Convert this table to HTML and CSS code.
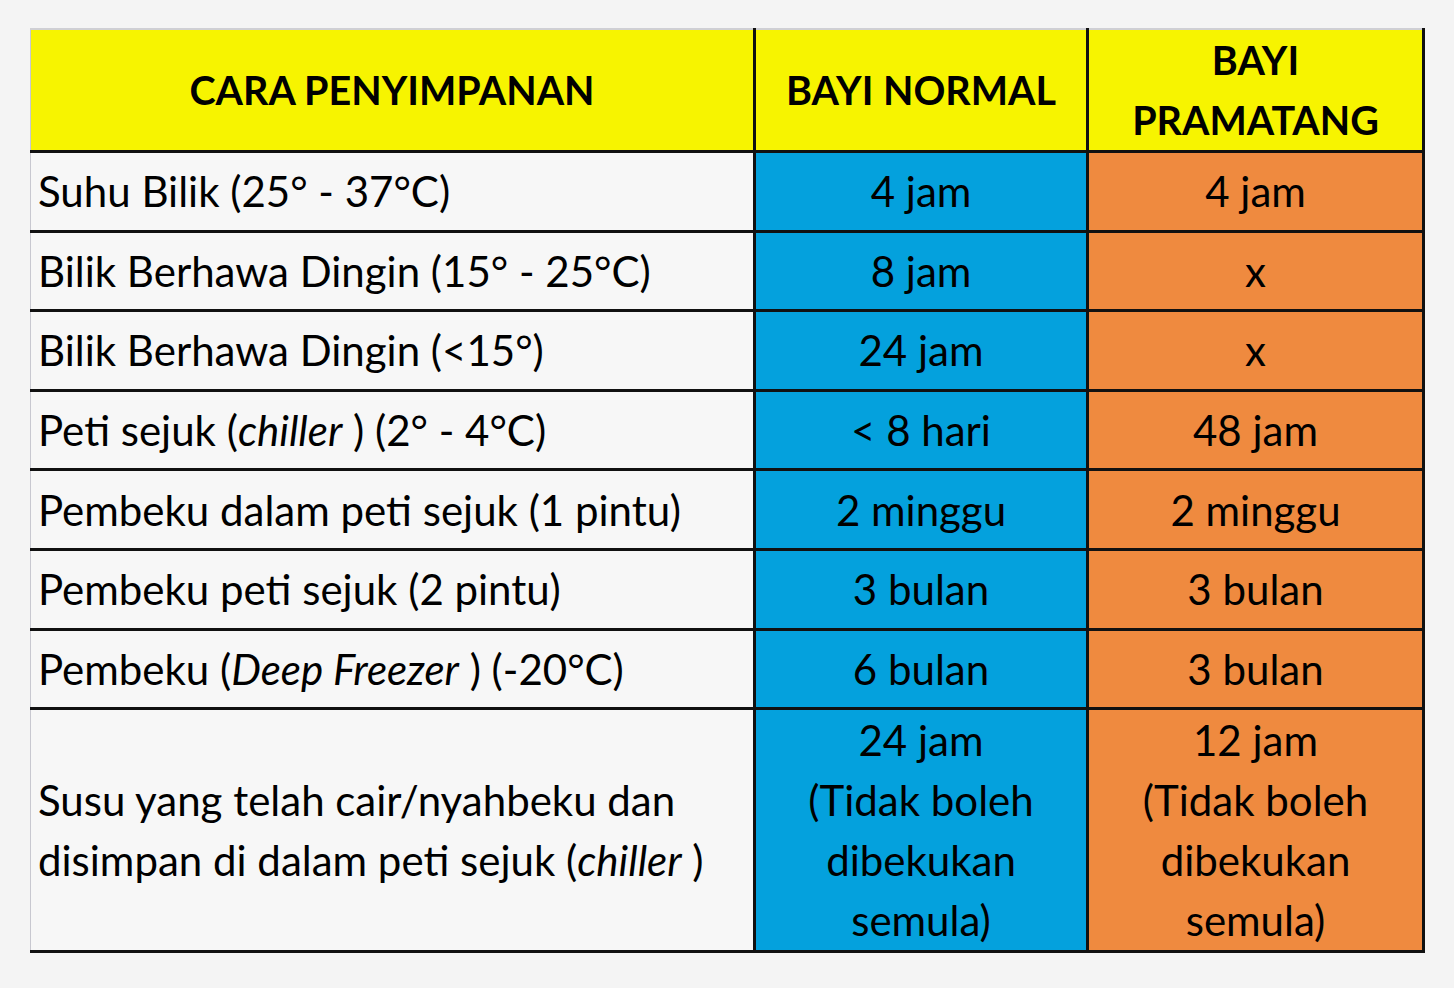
FILE: index.html
```html
<!DOCTYPE html>
<html>
<head>
<meta charset="utf-8">
<link rel="stylesheet" href="styles.css">
</head>
<body>
<table class="tbl">
  <colgroup><col class="c1"><col class="c2"><col class="c3"></colgroup>
  <tr class="head">
    <th>CARA PENYIMPANAN</th>
    <th>BAYI NORMAL</th>
    <th>BAYI<br>PRAMATANG</th>
  </tr>
  <tr><td class="lbl">Suhu Bilik (25° - 37°C)</td><td class="b">4 jam</td><td class="o">4 jam</td></tr>
  <tr><td class="lbl">Bilik Berhawa Dingin (15° - 25°C)</td><td class="b">8 jam</td><td class="o">x</td></tr>
  <tr><td class="lbl">Bilik Berhawa Dingin (&lt;15°)</td><td class="b">24 jam</td><td class="o">x</td></tr>
  <tr><td class="lbl">Peti sejuk (<i>chiller</i> ) (2° - 4°C)</td><td class="b">&lt; 8 hari</td><td class="o">48 jam</td></tr>
  <tr><td class="lbl">Pembeku dalam peti sejuk (1 pintu)</td><td class="b">2 minggu</td><td class="o">2 minggu</td></tr>
  <tr><td class="lbl">Pembeku peti sejuk (2 pintu)</td><td class="b">3 bulan</td><td class="o">3 bulan</td></tr>
  <tr><td class="lbl">Pembeku (<i>Deep Freezer</i> ) (-20°C)</td><td class="b">6 bulan</td><td class="o">3 bulan</td></tr>
  <tr class="last">
    <td class="lbl">Susu yang telah cair/nyahbeku dan<br>disimpan di dalam peti sejuk (<i>chiller</i> )</td>
    <td class="b">24 jam<br>(Tidak boleh<br>dibekukan<br>semula)</td>
    <td class="o">12 jam<br>(Tidak boleh<br>dibekukan<br>semula)</td>
  </tr>
</table>
</body>
</html>
```
FILE: styles.css
```css
html, body {
  margin: 0;
  padding: 0;
  background: #f4f4f4;
}
body {
  padding: 28px 0 0 30px;
  font-family: Lato, "Open Sans", sans-serif;
  color: #000;
}
.tbl {
  border-collapse: collapse;
  table-layout: fixed;
  width: 1393px;
  border-left: 1px solid #c8c8d0;
  border-top: 2px solid #cfcfd4;
}
.c1 { width: 724px; }
.c2 { width: 333px; }
.c3 { width: 336px; }
.tbl th, .tbl td {
  border: 3px solid #111;
  padding: 0;
  font-size: 42px;
  line-height: 60px;
  text-align: center;
  vertical-align: middle;
}
.tbl th:first-child, .tbl td:first-child { border-left: 1px solid #c8c8d0; }
.tbl tr.head th { border-top: none; }
.head th {
  background: #f7f400;
  height: 119px;
  font-weight: 700;
  font-size: 39.5px;
  line-height: 60px;
}
.tbl td { height: 76.6px; }
.tbl td.lbl {
  background: #f7f7f7;
  text-align: left;
  padding-left: 7px;
}
.tbl td.b { background: #04a1dd; }
.tbl td.o { background: #ef8a3f; }
.last td { height: 240px; }
```
